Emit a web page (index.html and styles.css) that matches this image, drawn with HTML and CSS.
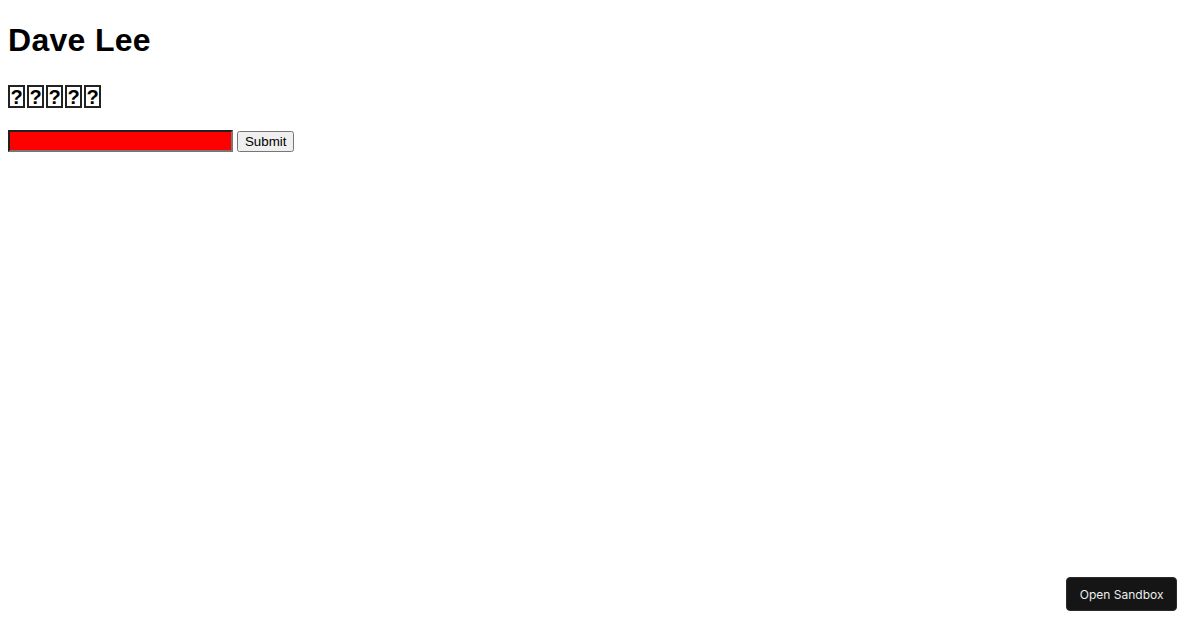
FILE: index.html
```html
<!DOCTYPE html>
<html>
<head>
<meta charset="utf-8">
<link rel="stylesheet" href="styles.css">
</head>
<body>
<h1 class="title">Dave Lee</h1>
<h2 class="subtitle"><span class="tofu">?</span><span class="tofu">?</span><span class="tofu">?</span><span class="tofu">?</span><span class="tofu">?</span></h2>
<form class="form">
<input class="field" type="text"> <button class="submit" type="button">Submit</button>
</form>
<button class="sandbox" type="button">Open Sandbox</button>
</body>
</html>
```

FILE: styles.css
```css
body {
  margin: 8px;
  font-family: "Liberation Sans", Arial, sans-serif;
  background: #fff;
  color: #000;
}
.title {
  font-size: 32px;
  font-weight: bold;
  letter-spacing: 0.3px;
  line-height: 37px;
  margin: 14px 0 23px;
}
.subtitle {
  font-size: 24px;
  font-weight: bold;
  line-height: 28px;
  height: 28px;
  margin: 0 0 20px;
  display: flex;
  align-items: center;
  gap: 2px;
}
.tofu {
  display: inline-flex;
  align-items: center;
  justify-content: center;
  box-sizing: border-box;
  width: 17px;
  height: 23px;
  border: 2px solid #222;
  font-size: 20px;
  line-height: 1;
  padding-top: 1px;
}
.form {
  margin: 0;
}
.field {
  background: #ff0000;
  width: 217px;
  height: 16px;
  font-family: "Liberation Sans", Arial, sans-serif;
  font-size: 13.33px;
}
.submit {
  font-family: "Liberation Sans", Arial, sans-serif;
  font-size: 13.33px;
  padding: 1px 5.5px;
}
.sandbox {
  position: fixed;
  right: 23px;
  bottom: 19px;
  background: #151515;
  color: #eee;
  border: 1px solid #2a2a2a;
  border-radius: 4px;
  padding: 0 12.5px;
  height: 34px;
  font-family: Inter, "Liberation Sans", sans-serif;
  font-size: 12px;
}
```
